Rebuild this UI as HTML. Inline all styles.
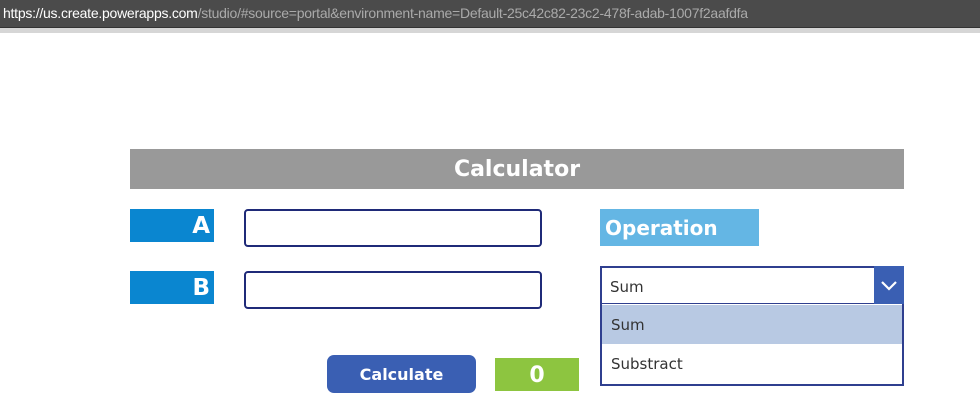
<!DOCTYPE html>
<html><head><style>
body{margin:0;width:980px;height:401px;background:#fff;position:relative;overflow:hidden;font-family:"Segoe UI","DejaVu Sans","Liberation Sans",sans-serif}
div{position:absolute;box-sizing:border-box}
.lab{background:#0a86d0;color:#fff;font-weight:bold;font-size:23px;text-align:right;padding-right:4px;line-height:35px}
.inp{border:2px solid #1f2a78;border-radius:4px;background:#fff}
</style></head><body>
<div style="left:0;top:0;width:980px;height:28px;background:#4b4b4b;border-bottom:1px solid #333"></div>
<div style="left:3px;top:5px;font-family:'Liberation Sans Narrow','Liberation Sans',sans-serif;font-size:14px;color:#aaa;white-space:nowrap;letter-spacing:-0.25px"><span style="color:#fff">https://us.create.powerapps.com</span>/studio/#source=portal&amp;environment-name=Default-25c42c82-23c2-478f-adab-1007f2aafdfa</div>
<div style="left:0;top:28px;width:980px;height:5px;background:#d6d6d6"></div>
<div style="left:130px;top:149px;width:774px;height:40px;background:#999;color:#fff;font-weight:bold;font-size:22px;text-align:center;line-height:42px">Calculator</div>
<div class="lab" style="left:130px;top:209px;width:84px;height:33px">A</div>
<div class="inp" style="left:244px;top:209px;width:298px;height:38px"></div>
<div class="lab" style="left:130px;top:271px;width:84px;height:33px">B</div>
<div class="inp" style="left:244px;top:271px;width:298px;height:38px"></div>
<div style="left:600px;top:209px;width:159px;height:37px;background:#64b6e4;color:#fff;font-weight:bold;font-size:20px;line-height:39px;padding-left:5px">Operation</div>
<div style="left:600px;top:266px;width:304px;height:39px;border:2px solid #2f3f8f;background:#fff;font-size:15px;color:#333;line-height:38px;padding-left:8px">Sum</div>
<div style="left:874px;top:266px;width:30px;height:39px;background:#3a5fb3"><svg width="30" height="39"><path d="M8 16 L15 23 L22 16" stroke="#fff" stroke-width="2.2" fill="none"/></svg></div>
<div style="left:600px;top:304px;width:304px;height:82px;border:2px solid #2f3f8f;border-top:none;background:#fff"></div>
<div style="left:602px;top:305px;width:300px;height:39px;background:#b8c9e3;font-size:15px;color:#333;line-height:41px;padding-left:9px">Sum</div>
<div style="left:602px;top:345px;width:300px;height:39px;font-size:15px;color:#333;line-height:39px;padding-left:9px">Substract</div>
<div style="left:327px;top:355px;width:149px;height:38px;background:#3a5fb3;border-radius:7px;color:#fff;font-weight:bold;font-size:16px;text-align:center;line-height:40px">Calculate</div>
<div style="left:495px;top:358px;width:84px;height:33px;background:#8dc540;color:#fff;font-weight:bold;font-size:22px;text-align:center;line-height:35px">0</div>
</body></html>
